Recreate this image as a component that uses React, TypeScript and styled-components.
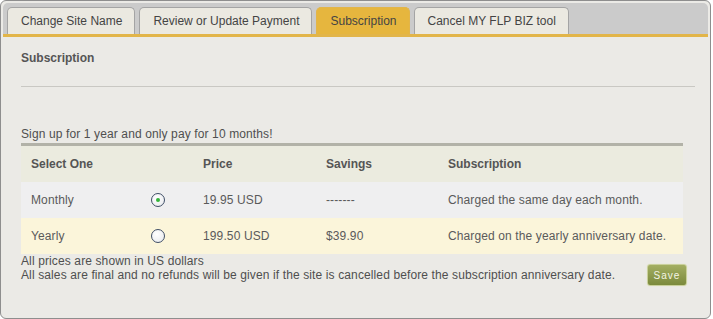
import React from 'react';
import styled, { createGlobalStyle } from 'styled-components';

const GlobalStyle = createGlobalStyle`
  html, body {
    margin: 0;
    padding: 0;
    background: #ffffff;
  }
  body {
    font-family: "Liberation Sans", Arial, sans-serif;
    font-size: 12px;
    color: #555;
  }
`;

const Panel = styled.div`
  width: 709px;
  height: 317px;
  border: 1px solid #8e8e8e;
  border-radius: 6px;
  background: #ebeae6;
  overflow: hidden;
  box-sizing: content-box;
`;

const TabBar = styled.div`
  display: flex;
  gap: 4px;
  align-items: flex-end;
  margin: 2px 2px 0 2px;
  padding: 3px 0 0 4px;
  height: 28px;
  background: #cbcbcb;
  border-radius: 5px 5px 0 0;
  border-bottom: 3px solid #e2b549;
`;

const Tab = styled.div<{ active?: boolean }>`
  height: 27px;
  padding: 0 12px 0 13px;
  display: flex;
  align-items: center;
  box-sizing: border-box;
  border: 1px solid ${p => (p.active ? '#e2b549' : '#a4a4a4')};
  border-bottom: none;
  border-radius: 5px 5px 0 0;
  background: ${p => (p.active ? '#e6b63e' : '#ebe9e1')};
  color: #444;
  font-size: 12px;
  letter-spacing: 0;
  white-space: nowrap;
`;

const Content = styled.div`
  padding: 14px 15px 0 20px;
  letter-spacing: 0.12px;
`;

const Heading = styled.div`
  font-weight: bold;
  font-size: 12px;
  line-height: 14px;
  color: #555;
  letter-spacing: 0;
`;

const Rule = styled.div`
  margin-top: 21px;
  height: 1px;
  background: #c9c8c3;
`;

const Intro = styled.div`
  margin-top: 40px;
  line-height: 14px;
  color: #4f4f4f;
`;

const Table = styled.div`
  margin-top: 2px;
  width: 662px;
  border-top: 3px solid #b2b2a8;
`;

const Row = styled.div<{ tone: 'head' | 'gray' | 'cream' }>`
  display: grid;
  grid-template-columns: 112px 60px 123px 122px 1fr;
  align-items: center;
  height: 36px;
  background: ${p =>
    p.tone === 'head' ? '#ebebdf' : p.tone === 'gray' ? '#efeff0' : '#fbf5da'};
  font-weight: ${p => (p.tone === 'head' ? 'bold' : 'normal')};
  letter-spacing: ${p => (p.tone === 'head' ? '0' : '0.12px')};
  color: ${p => (p.tone === 'head' ? '#555' : '#5a5a5a')};
`;

const Cell = styled.div`
  padding-left: 10px;
  white-space: nowrap;
`;

const RadioCell = styled.div`
  padding-left: 18px;
  display: flex;
  align-items: center;
`;

const Radio = styled.span<{ checked?: boolean }>`
  width: 12px;
  height: 12px;
  border: 1px solid #3f4e66;
  border-radius: 50%;
  background: radial-gradient(circle at 40% 35%, #ffffff 0%, #e6e8ec 100%);
  display: flex;
  align-items: center;
  justify-content: center;

  &::after {
    content: '';
    width: 4px;
    height: 4px;
    border-radius: 50%;
    background: ${p => (p.checked ? '#33b53a' : 'transparent')};
  }
`;

const Footer = styled.div`
  display: flex;
  align-items: flex-start;
  justify-content: space-between;
  width: 666px;
`;

const Notes = styled.div`
  line-height: 14px;
  color: #4f4f4f;
`;

const SaveButton = styled.button`
  margin-top: 10px;
  width: 40px;
  height: 22px;
  padding: 0;
  border: 1px solid #c9d09b;
  border-radius: 3px;
  background: linear-gradient(#a3ae62, #7b8a3c);
  box-shadow: 0 0 1px #d6dcae;
  color: #f4f4e4;
  font-family: "Liberation Sans", Arial, sans-serif;
  font-size: 10px;
  letter-spacing: 1px;
  cursor: pointer;
`;

const tabs = ['Change Site Name', 'Review or Update Payment', 'Subscription', 'Cancel MY FLP BIZ tool'];

const plans = [
  { name: 'Monthly', price: '19.95 USD', savings: '-------', note: 'Charged the same day each month.', checked: true, tone: 'gray' as const },
  { name: 'Yearly', price: '199.50 USD', savings: '$39.90', note: 'Charged on the yearly anniversary date.', checked: false, tone: 'cream' as const },
];

export default function App() {
  return (
    <>
      <GlobalStyle />
      <Panel>
        <TabBar>
          {tabs.map(t => (
            <Tab key={t} active={t === 'Subscription'}>{t}</Tab>
          ))}
        </TabBar>
        <Content>
          <Heading>Subscription</Heading>
          <Rule />
          <Intro>Sign up for 1 year and only pay for 10 months!</Intro>
          <Table>
            <Row tone="head">
              <Cell>Select One</Cell>
              <div />
              <Cell>Price</Cell>
              <Cell>Savings</Cell>
              <Cell>Subscription</Cell>
            </Row>
            {plans.map(p => (
              <Row key={p.name} tone={p.tone}>
                <Cell>{p.name}</Cell>
                <RadioCell>
                  <Radio checked={p.checked} />
                </RadioCell>
                <Cell>{p.price}</Cell>
                <Cell>{p.savings}</Cell>
                <Cell>{p.note}</Cell>
              </Row>
            ))}
          </Table>
          <Footer>
            <Notes>
              All prices are shown in US dollars
              <br />
              All sales are final and no refunds will be given if the site is cancelled before the subscription anniversary date.
            </Notes>
            <SaveButton>Save</SaveButton>
          </Footer>
        </Content>
      </Panel>
    </>
  );
}
